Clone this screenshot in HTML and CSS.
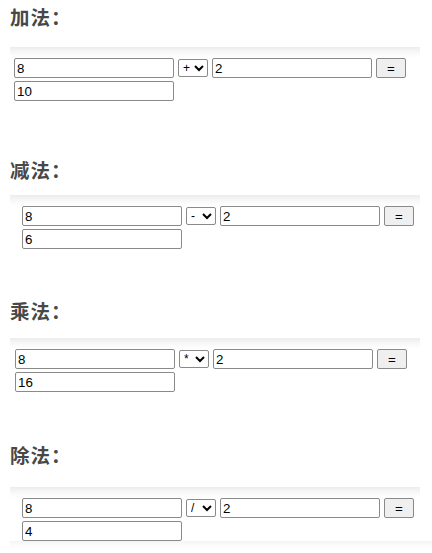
FILE: index.html
```html
<!DOCTYPE html>
<html lang="zh-CN">
<head>
    <meta charset="UTF-8">
    <meta name="viewport" content="width=device-width, initial-scale=1.0">
    <title>计算器</title>
    <link rel="stylesheet" href="styles.css">
</head>
<body>
    <div class="section sec-add">
        <h3>加法：</h3>
        <div class="calc">
            <div class="row">
                <input type="text" value="8">
                <select><option>+</option></select>
                <input type="text" value="2">
                <button>=</button>
            </div>
            <div class="row">
                <input type="text" value="10">
            </div>
        </div>
    </div>

    <div class="section sec-sub">
        <h3>减法：</h3>
        <div class="calc">
            <div class="row">
                <input type="text" value="8">
                <select><option>-</option></select>
                <input type="text" value="2">
                <button>=</button>
            </div>
            <div class="row">
                <input type="text" value="6">
            </div>
        </div>
    </div>

    <div class="section sec-mul">
        <h3>乘法：</h3>
        <div class="calc">
            <div class="row">
                <input type="text" value="8">
                <select><option>*</option></select>
                <input type="text" value="2">
                <button>=</button>
            </div>
            <div class="row">
                <input type="text" value="16">
            </div>
        </div>
    </div>

    <div class="section sec-div">
        <h3>除法：</h3>
        <div class="calc">
            <div class="row">
                <input type="text" value="8">
                <select><option>/</option></select>
                <input type="text" value="2">
                <button>=</button>
            </div>
            <div class="row">
                <input type="text" value="4">
            </div>
        </div>
    </div>

    <div class="foot"></div>
</body>
</html>
```

FILE: styles.css
```css
* {
    margin: 0;
    padding: 0;
    box-sizing: border-box;
}

body {
    font-family: 'Liberation Sans', Arial, sans-serif;
    background: #fff;
}

.section h3 {
    font-family: 'Noto Sans CJK SC', 'Noto Sans', sans-serif;
    font-size: 19.5px;
    font-weight: bold;
    line-height: 26px;
    letter-spacing: 1px;
    color: #484848;
    margin-left: 10px;
}

.calc {
    width: 410px;
    margin-left: 10px;
    padding-top: 11px;
    background: linear-gradient(to bottom, #ececec 0, #f7f7f7 5px, #fff 11px);
}

.row {
    display: flex;
    align-items: center;
    gap: 4px;
    margin-bottom: 3px;
}

.row:last-child {
    margin-bottom: 0;
}

.row input {
    width: 160px;
    height: 20px;
    padding: 1px 2px;
    border: 1px solid #8a8a8a;
    border-radius: 2px;
    font-family: 'Liberation Sans', Arial, sans-serif;
    font-size: 13.33px;
    color: #000;
    background: #fff;
}

.row select {
    width: 30px;
    height: 18px;
    border: 1px solid #8a8a8a;
    border-radius: 2px;
    font-family: 'Liberation Sans', Arial, sans-serif;
    font-size: 12px;
    color: #000;
    background: #fff;
}

.row button {
    width: 30px;
    height: 20px;
    border: 1px solid #8a8a8a;
    border-radius: 2px;
    background: #efefef;
    font-family: 'Liberation Sans', Arial, sans-serif;
    font-size: 13.33px;
    color: #000;
}

/* 每一块的位置略有不同 */
.sec-add h3 {
    padding-top: 4px;
    margin-bottom: 17px;
}

.sec-add .calc {
    padding-left: 4px;
}

.sec-sub h3 {
    margin-top: 56px;
    margin-bottom: 12px;
}

.sec-sub .calc {
    padding-left: 12px;
}

.sec-mul h3 {
    margin-top: 49px;
    margin-bottom: 14px;
}

.sec-mul .calc {
    padding-left: 5px;
}

.sec-div h3 {
    margin-top: 50px;
    margin-bottom: 19px;
}

.sec-div .calc {
    padding-left: 12px;
}

.foot {
    margin-left: 10px;
    height: 6px;
    background: linear-gradient(to bottom, #f4f4f4, #fff);
}
```
